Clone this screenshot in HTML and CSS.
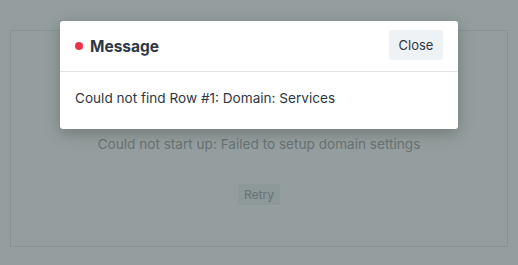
FILE: index.html
```html
<!DOCTYPE html>
<html>
<head>
<meta charset="utf-8">
<link rel="stylesheet" href="styles.css">
</head>
<body>
<div class="page">
  <div class="card">
    <p class="err">Could not start up: Failed to setup domain settings</p>
    <span class="retry">Retry</span>
  </div>
</div>
<div class="modal">
  <div class="modal-head">
    <span class="dot"></span>
    <span class="title">Message</span>
    <span class="close">Close</span>
  </div>
  <div class="modal-body">Could not find Row #1: Domain: Services</div>
</div>
</body>
</html>
```
FILE: styles.css
```css
html, body {
  margin: 0;
  padding: 0;
}
body {
  width: 518px;
  height: 265px;
  background: #959e9e;
  font-family: Inter, "Noto Sans", sans-serif;
  overflow: hidden;
  position: relative;
}
.page {
  padding: 30px 10px 0 10px;
}
.card {
  height: 215px;
  border: 1px solid #899393;
  display: flex;
  flex-direction: column;
  align-items: center;
}
.err {
  margin: 104px 0 0 0;
  font-size: 13.6px;
  line-height: 18px;
  color: #687374;
}
.retry {
  margin-top: 31px;
  background: #8d9898;
  color: #687374;
  font-size: 12px;
  line-height: 21px;
  padding: 0 6px;
  border-radius: 3px;
}
.modal {
  position: absolute;
  left: 60px;
  top: 21px;
  width: 398px;
  height: 108px;
  background: #fff;
  border-radius: 3px;
  box-shadow: 0 4px 16px rgba(0,0,0,0.25);
}
.modal-head {
  height: 50px;
  display: flex;
  align-items: center;
  padding: 0 15px;
  border-bottom: 1px solid #e2e5e8;
}
.dot {
  width: 8px;
  height: 8px;
  border-radius: 50%;
  background: #f0304a;
  margin-right: 7px;
}
.title {
  font-size: 15.5px;
  font-weight: 700;
  color: #2e3745;
  flex: 1;
}
.close {
  width: 54px;
  height: 30px;
  line-height: 30px;
  text-align: center;
  font-size: 13px;
  color: #2e3745;
  background: #eef2f5;
  border-radius: 3px;
  margin-top: -2px;
}
.modal-body {
  padding: 17px 15px 0 15px;
  font-size: 13.6px;
  line-height: 18px;
  color: #2e3745;
}
```
